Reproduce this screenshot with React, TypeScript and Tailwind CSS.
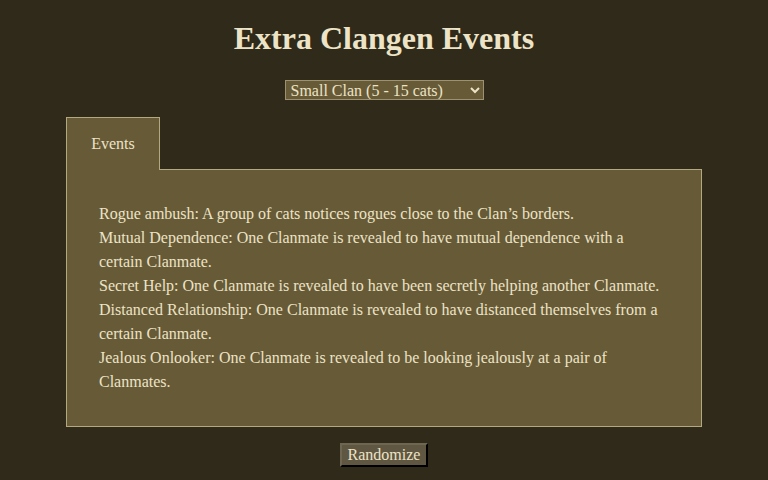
import { useState } from 'react'

const EVENTS = [
  'Rogue ambush: A group of cats notices rogues close to the Clan’s borders.',
  'Mutual Dependence: One Clanmate is revealed to have mutual dependence with a certain Clanmate.',
  'Secret Help: One Clanmate is revealed to have been secretly helping another Clanmate.',
  'Distanced Relationship: One Clanmate is revealed to have distanced themselves from a certain Clanmate.',
  'Jealous Onlooker: One Clanmate is revealed to be looking jealously at a pair of Clanmates.',
]

export default function App() {
  const [size, setSize] = useState('small')

  return (
    <div className="min-h-[480px] bg-[#2f2a1a] text-[#ede3c6] font-['Liberation_Serif',serif] flex flex-col items-center">
      <h1 className="mt-[20px] text-[32px] font-bold leading-[37px]">Extra Clangen Events</h1>

      <select
        value={size}
        onChange={(e) => setSize(e.target.value)}
        className="mt-[23px] w-[199px] h-[20px] text-[16px] leading-[18px] bg-[#665a37] border border-[#9d9270] text-[#ede3c6] pl-[1px]"
      >
        <option value="small">Small Clan (5 - 15 cats)</option>
        <option value="medium">Medium Clan (16 - 30 cats)</option>
        <option value="large">Large Clan (31+ cats)</option>
      </select>

      <div className="mt-[17px] w-[636px] flex flex-col">
        <div className="flex">
          <div className="relative z-10 -mb-px h-[53px] w-[94px] flex items-center justify-center text-[16px] bg-[#665a37] border border-b-0 border-[#b3a87f]">
            Events
          </div>
        </div>
        <div className="border border-[#b3a87f] bg-[#665a37] px-[32px] pt-[32px] pb-[32px] text-[16px] leading-[24px]">
          {EVENTS.map((ev) => (
            <p key={ev}>{ev}</p>
          ))}
        </div>
      </div>

      <button className="mt-[16px] h-[24px] px-[6px] text-[16px] leading-[18px] bg-[#5f5741] text-[#ede3c6] border-2 border-t-[#6e6650] border-l-[#6e6650] border-b-black border-r-black">
        Randomize
      </button>
    </div>
  )
}
